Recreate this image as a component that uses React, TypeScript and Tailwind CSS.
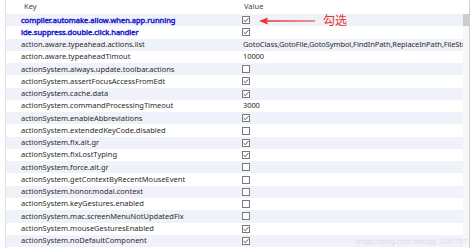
import React from "react";

type Row = { key: string; bold?: boolean; value: boolean | string };

const rows: Row[] = [
  { key: "compiler.automake.allow.when.app.running", bold: true, value: true },
  { key: "ide.suppress.double.click.handler", bold: true, value: true },
  {
    key: "action.aware.typeahead.actions.list",
    value: "GotoClass,GotoFile,GotoSymbol,FindInPath,ReplaceInPath,FileStr",
  },
  { key: "action.aware.typeaheadTimout", value: "10000" },
  { key: "actionSystem.always.update.toolbar.actions", value: false },
  { key: "actionSystem.assertFocusAccessFromEdt", value: true },
  { key: "actionSystem.cache.data", value: true },
  { key: "actionSystem.commandProcessingTimeout", value: "3000" },
  { key: "actionSystem.enableAbbreviations", value: true },
  { key: "actionSystem.extendedKeyCode.disabled", value: false },
  { key: "actionSystem.fix.alt.gr", value: true },
  { key: "actionSystem.fixLostTyping", value: true },
  { key: "actionSystem.force.alt.gr", value: false },
  { key: "actionSystem.getContextByRecentMouseEvent", value: false },
  { key: "actionSystem.honor.modal.context", value: false },
  { key: "actionSystem.keyGestures.enabled", value: false },
  { key: "actionSystem.mac.screenMenuNotUpdatedFix", value: false },
  { key: "actionSystem.mouseGesturesEnabled", value: true },
  { key: "actionSystem.noDefaultComponent", value: true },
];

const CheckBox = ({ checked }: { checked: boolean }) => (
  <div className="w-[8px] h-[8px] border border-[#7a7a7a] bg-white flex items-center justify-center">
    {checked && (
      <svg width="6" height="6" viewBox="0 0 6 6">
        <path d="M0.6 3.1 L2.3 4.7 L5.4 1.2" fill="none" stroke="#444" strokeWidth="0.9" />
      </svg>
    )}
  </div>
);

export default function App() {
  return (
    <div
      className="relative w-[474px] h-[248px] bg-white flex overflow-hidden text-[7.5px] text-[#2b2b2b]"
      style={{ fontFamily: '"Noto Sans", "Noto Sans CJK SC", sans-serif' }}
    >
      {/* left gutter */}
      <div className="w-[6px] border-r border-[#e2e2e2] shrink-0" />

      {/* table */}
      <div className="flex-1 flex flex-col min-w-0">
        <div className="h-[14px] flex items-center shrink-0 bg-white">
          <div className="w-[233px] pl-[18px] text-[#444]">Key</div>
          <div className="pl-[5px] text-[#444]">Value</div>
        </div>
        {rows.map((r, i) => (
          <div
            key={r.key}
            className={`h-[12.28px] flex items-center shrink-0 ${i % 2 === 0 ? "bg-[#eff2f8]" : "bg-white"}`}
          >
            <div
              className={`w-[233px] pl-[15px] whitespace-nowrap overflow-hidden ${
                r.bold ? "text-[#1c1cd0] [-webkit-text-stroke:0.45px_#1c1cd0]" : "text-[#2b2b2b]"
              }`}
            >
              {r.key}
            </div>
            <div className="flex-1 min-w-0 pl-[3px] whitespace-nowrap overflow-hidden">
              {typeof r.value === "boolean" ? (
                <CheckBox checked={r.value} />
              ) : (
                <span className="pl-[1px] tracking-[-0.1px]">{r.value}</span>
              )}
            </div>
          </div>
        ))}
      </div>

      {/* scrollbar */}
      <div className="w-[6px] shrink-0 flex flex-col bg-[#f7f7f7]">
        <div className="h-[14px] bg-white" />
        <div className="h-[12px] bg-[#cdcdcd]" />
      </div>
      <div className="w-[1px] shrink-0 bg-[#cfcfcf]" />
      <div className="w-[4px] shrink-0 bg-white" />

      {/* annotation */}
      <div className="absolute left-[259px] top-[15px] flex items-center">
        <svg width="58" height="10" viewBox="0 0 58 10">
          <path d="M0 5 L9 1.5 L8 4.2 L56 4.4 L56 5.6 L8 5.8 L9 8.5 Z" fill="#e8332f" />
        </svg>
        <span className="ml-[6px] text-[12px] leading-none text-[#e8332f]">勾选</span>
      </div>

      {/* watermark */}
      <div className="absolute left-[356px] top-[237px] text-[7px] text-[#d9dde4] whitespace-nowrap">
        https://blog.csdn.net/qq_33317971
      </div>
    </div>
  );
}
